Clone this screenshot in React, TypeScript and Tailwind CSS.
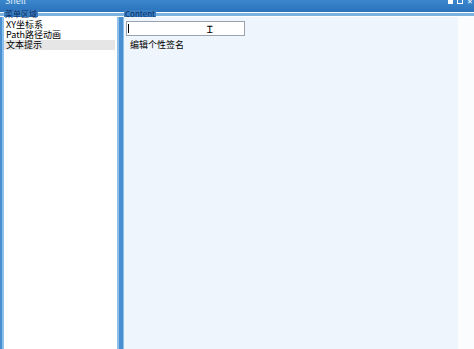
const font = { fontFamily: '"Noto Sans CJK SC", "Liberation Sans", sans-serif' }

function Items() {
  const items = ['XY坐标系', 'Path路径动画', '文本提示']
  return (
    <ul className="pt-[3px] text-[9px] text-black">
      {items.map((t, i) => (
        <li
          key={t}
          className={`mr-[2px] h-[10px] overflow-hidden pl-[2px] leading-[10px] ${i === 2 ? 'bg-[#e6e6e6]' : ''}`}
        >
          {t}
        </li>
      ))}
    </ul>
  )
}

function GroupHeader({ label, indent }: { label: string; indent: string }) {
  return (
    <div className="flex h-[5px] items-center">
      <div className={`h-[3px] ${indent} bg-[#7ab2e2]`} />
      <span className="relative z-10 -mt-[2px] h-[7px] bg-[#3a7fc2] px-[1px] text-[8px] leading-[7px] text-[#0d2f66]">
        {label}
      </span>
      <div className="h-[3px] flex-1 bg-[#7ab2e2]" />
    </div>
  )
}

export default function App() {
  return (
    <div className="flex h-[349px] w-[474px] flex-col overflow-hidden bg-white" style={font}>
      {/* title bar */}
      <div className="relative h-[12px] bg-gradient-to-b from-[#3b86cc] to-[#2a73bd]">
        <span className="absolute left-[5px] top-[-5px] text-[9px] leading-[12px] text-[#dfeaf7]">Shell</span>
        <div className="absolute right-[2px] top-[-1px] flex gap-[4px]">
          <span className="block h-[5px] w-[5px] bg-white" />
          <span className="block h-[5px] w-[6px] border border-white" />
          <span className="block h-[5px] w-[5px] text-[7px] leading-[5px] text-white">✕</span>
        </div>
      </div>
      <div className="flex flex-1">
        {/* left group */}
        <div className="flex w-[121px] flex-col">
          <GroupHeader label="菜单区域" indent="w-[4px]" />
          <div className="flex flex-1">
            <div className="w-[4px] border-l-2 border-[#4a8fd0] bg-[#8cc0ec]" />
            <div className="flex-1 bg-white">
              <Items />
            </div>
            <div className="w-[4px] border-r-2 border-[#4a8fd0] bg-[#8cc0ec]" />
          </div>
        </div>
        {/* right group */}
        <div className="flex flex-1 flex-col">
          <GroupHeader label="Content" indent="w-[3px]" />
          <div className="flex flex-1">
            <div className="w-[3px] border-l-2 border-[#4a8fd0] bg-[#8cc0ec]" />
            <div className="relative flex-1 bg-[#eef5fd] pl-[1px] pt-[4px]">
              <div className="ml-[1px] h-[15px] w-[119px] border border-[#9aa3ad] bg-white">
                <span className="ml-[1px] mt-[2px] block h-[9px] w-[1px] bg-black" />
              </div>
              <span className="absolute left-[83px] top-[7px] text-[10px] leading-[10px] text-black">Ɪ</span>
              <div className="mt-[4px] pl-[5px] text-[9px] leading-[10px] text-black">编辑个性签名</div>
            </div>
            <div className="w-[16px] bg-[#fafcfe]" />
          </div>
        </div>
      </div>
    </div>
  )
}
